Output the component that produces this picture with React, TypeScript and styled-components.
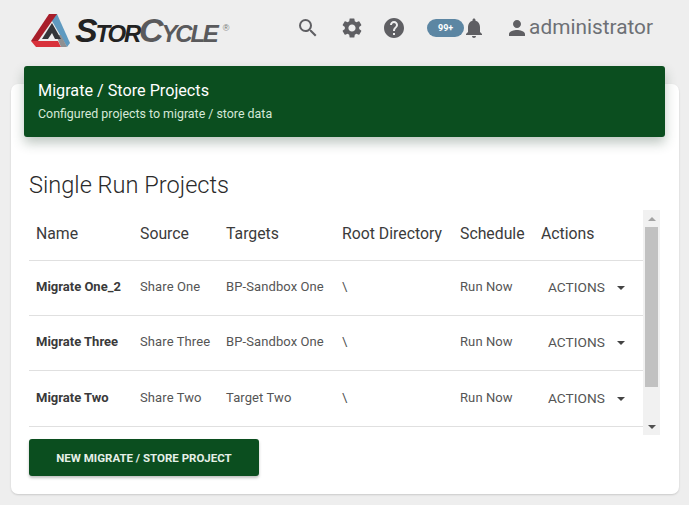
import React from "react";
import styled, { createGlobalStyle } from "styled-components";

const Global = createGlobalStyle`
  html, body { margin: 0; padding: 0; background: #eeeeee; }
  body { font-family: Roboto, "Liberation Sans", sans-serif; }
  #root { width: 689px; height: 505px; overflow: hidden; }
`;

const Page = styled.div`
  width: 689px;
  height: 505px;
  display: flex;
  flex-direction: column;
`;

const Header = styled.header`
  height: 56px;
  display: flex;
  align-items: center;
  padding: 0 36px 0 30px;
  color: #5f6368;
`;

const Logo = styled.div`
  display: flex;
  align-items: center;
  gap: 5px;
  margin-right: auto;
`;

const LogoMarkSvg = styled.svg`
  position: relative;
  top: 3px;
`;

const LogoText = styled.span`
  font-family: "Liberation Sans", Arial, sans-serif;
  font-style: italic;
  font-weight: 700;
  font-size: 34px;
  font-variant: small-caps;
  letter-spacing: -2.2px;
  line-height: 36px;
  color: #222;
  position: relative;
  top: 6px;
`;

const LogoAccent = styled.span`
  color: #5a5a5c;
`;

const Registered = styled.sup`
  font-family: "Liberation Sans", Arial, sans-serif;
  font-size: 9px;
  font-style: normal;
  font-weight: 400;
  letter-spacing: 0;
  color: #777;
  position: relative;
  top: -11px;
  left: 6px;
  vertical-align: baseline;
`;

const IconGroup = styled.div`
  display: flex;
  align-items: center;
`;

const IconSlot = styled.span<{ $mr?: number; $ml?: number }>`
  display: flex;
  color: #5f5f63;
  margin-right: ${(p) => p.$mr ?? 0}px;
  margin-left: ${(p) => p.$ml ?? 0}px;
`;

const Badge = styled.span`
  width: 37px;
  height: 18px;
  border-radius: 9px;
  background: #5c86a3;
  color: #fff;
  font-size: 9px;
  font-weight: 700;
  display: flex;
  align-items: center;
  justify-content: center;
`;

const UserName = styled.span`
  font-size: 20.8px;
  color: #6d7075;
  position: relative;
  top: -1px;
`;

const Card = styled.main`
  margin: 28px 10px 0 11px;
  height: 410px;
  background: #fff;
  border-radius: 7px;
  box-shadow: 0 1px 2px rgba(0, 0, 0, 0.15);
  display: flex;
  flex-direction: column;
  padding: 0 18px;
`;

const Banner = styled.section`
  margin: -18px 0 0 -5px;
  width: 641px;
  height: 71px;
  box-sizing: border-box;
  background: #0b4e1f;
  border-radius: 3px;
  padding: 15px 14px;
  box-shadow: 0 6px 12px rgba(40, 70, 50, 0.3);
  flex: none;
`;

const BannerTitle = styled.div`
  color: #fff;
  font-size: 16.2px;
  line-height: 20px;
`;

const BannerSub = styled.div`
  color: #d5e8d8;
  font-size: 12.4px;
  line-height: 16px;
  margin-top: 5px;
`;

const Heading = styled.h2`
  margin: 33px 0 0;
  font-size: 23.6px;
  font-weight: 300;
  line-height: 30px;
  color: #2a2a2a;
`;

const TableWrap = styled.div`
  display: flex;
  margin-top: 10px;
  height: 225px;
  width: 631px;
`;

const TableClip = styled.div`
  width: 614px;
  height: 225px;
  overflow: hidden;
`;

const Table = styled.table`
  width: 614px;
  table-layout: fixed;
  border-collapse: collapse;
`;

const Th = styled.th<{ $w: number }>`
  width: ${(p) => p.$w}px;
  height: 50px;
  box-sizing: border-box;
  padding: 0 0 2px 7px;
  font-size: 15.8px;
  font-weight: 400;
  text-align: left;
  color: #3b3b3b;
  border-bottom: 1px solid #e0e0e0;
  white-space: nowrap;
`;

const Row = styled.tr<{ $h: number }>`
  height: ${(p) => p.$h}px;
`;

const Td = styled.td<{ $bold?: boolean }>`
  padding: 0 0 2px 7px;
  font-size: 13px;
  letter-spacing: ${(p) => (p.$bold ? "0" : "0.1px")};
  font-weight: ${(p) => (p.$bold ? 700 : 400)};
  color: ${(p) => (p.$bold ? "#3a3a3a" : "#555")};
  border-bottom: 1px solid #e0e0e0;
  white-space: nowrap;
`;

const ActionBtn = styled.div`
  display: inline-flex;
  align-items: center;
  font-size: 13.7px;
  letter-spacing: 0;
  color: #555;
  margin: 1px 0 0 7px;
  width: 77px;
  justify-content: space-between;
`;

const Caret = styled.span`
  width: 0;
  height: 0;
  border-left: 4px solid transparent;
  border-right: 4px solid transparent;
  border-top: 4px solid #444;
  margin-top: 2px;
`;

const Scrollbar = styled.div`
  width: 17px;
  height: 225px;
  background: #f1f1f1;
  display: flex;
  flex-direction: column;
  align-items: center;
`;

const Arrow = styled.div<{ $up?: boolean }>`
  flex: none;
  height: 17px;
  width: 17px;
  display: flex;
  align-items: center;
  justify-content: center;
  &::after {
    content: "";
    border-left: 4px solid transparent;
    border-right: 4px solid transparent;
    ${(p) =>
      p.$up ? "border-bottom: 4px solid #a3a3a3;" : "border-top: 4px solid #505050;"}
  }
`;

const Thumb = styled.div`
  width: 13px;
  height: 160px;
  background: #c1c1c1;
`;

const Spacer = styled.div`
  flex: 1;
`;

const NewButton = styled.button`
  flex: none;
  width: 230px;
  height: 37px;
  margin-top: 4px;
  border: 0;
  border-radius: 3px;
  background: #0b4e1f;
  color: #e6f0e8;
  font-family: Roboto, "Liberation Sans", sans-serif;
  font-size: 11.5px;
  font-weight: 700;
  box-shadow: 0 2px 3px rgba(0, 0, 0, 0.25);
`;

const Search = () => (
  <svg width="24" height="24" viewBox="0 0 24 24" fill="currentColor">
    <path d="M15.5 14h-.79l-.28-.27A6.47 6.47 0 0 0 16 9.5 6.5 6.5 0 1 0 9.5 16c1.61 0 3.09-.59 4.23-1.57l.27.28v.79l5 4.99L20.49 19l-4.99-5zm-6 0C7.01 14 5 11.99 5 9.5S7.01 5 9.5 5 14 7.01 14 9.5 11.99 14 9.5 14z" />
  </svg>
);
const Gear = () => (
  <svg width="24" height="24" viewBox="0 0 24 24" fill="currentColor">
    <path d="M19.14 12.94c.04-.3.06-.61.06-.94 0-.32-.02-.64-.07-.94l2.03-1.58a.49.49 0 0 0 .12-.61l-1.92-3.32a.488.488 0 0 0-.59-.22l-2.39.96c-.5-.38-1.03-.7-1.62-.94l-.36-2.54a.484.484 0 0 0-.48-.41h-3.84c-.24 0-.43.17-.47.41l-.36 2.54c-.59.24-1.13.57-1.62.94l-2.39-.96c-.22-.08-.47 0-.59.22L2.74 8.87c-.12.21-.08.47.12.61l2.03 1.58c-.05.3-.09.63-.09.94s.02.64.07.94l-2.03 1.58a.49.49 0 0 0-.12.61l1.92 3.32c.12.22.37.29.59.22l2.39-.96c.5.38 1.03.7 1.62.94l.36 2.54c.05.24.24.41.48.41h3.84c.24 0 .44-.17.47-.41l.36-2.54c.59-.24 1.13-.56 1.62-.94l2.39.96c.22.08.47 0 .59-.22l1.92-3.32c.12-.22.07-.47-.12-.61l-2.01-1.58zM12 15.6c-1.98 0-3.6-1.62-3.6-3.6s1.62-3.6 3.6-3.6 3.6 1.62 3.6 3.6-1.62 3.6-3.6 3.6z" />
  </svg>
);
const Help = () => (
  <svg width="24" height="24" viewBox="0 0 24 24" fill="currentColor">
    <path d="M12 2C6.48 2 2 6.48 2 12s4.48 10 10 10 10-4.48 10-10S17.52 2 12 2zm1 17h-2v-2h2v2zm2.07-7.75l-.9.92C13.45 12.9 13 13.5 13 15h-2v-.5c0-1.1.45-2.1 1.17-2.83l1.24-1.26c.37-.36.59-.86.59-1.41 0-1.1-.9-2-2-2s-2 .9-2 2H8c0-2.21 1.79-4 4-4s4 1.79 4 4c0 .88-.36 1.68-.93 2.25z" />
  </svg>
);
const Bell = () => (
  <svg width="24" height="24" viewBox="0 0 24 24" fill="currentColor">
    <path d="M12 22c1.1 0 2-.9 2-2h-4c0 1.1.89 2 2 2zm6-6v-5c0-3.07-1.64-5.64-4.5-6.32V4c0-.83-.67-1.5-1.5-1.5s-1.5.67-1.5 1.5v.68C7.63 5.36 6 7.92 6 11v5l-2 2v1h16v-1l-2-2z" />
  </svg>
);
const Person = () => (
  <svg width="24" height="24" viewBox="0 0 24 24" fill="currentColor">
    <path d="M12 12c2.21 0 4-1.79 4-4s-1.79-4-4-4-4 1.79-4 4 1.79 4 4 4zm0 2c-2.67 0-8 1.34-8 4v2h16v-2c0-2.66-5.33-4-8-4z" />
  </svg>
);

const LogoMark = () => (
  <LogoMarkSvg width="40" height="36" viewBox="0 0 40 36">
    <polygon points="19,1 27,1 40,30 37,34 22,8" fill="#5f9ac0" />
    <polygon points="19,1 27,1 8,28 1,28" fill="#a81e2a" />
    <polygon points="1,28 28,28 31,34 6,34" fill="#d8313b" />
    <polygon points="26,22 31,22 37,34 31,34" fill="#8f9092" />
    <polygon points="12,26 22,10 31,26 25,26 22,20 18,26" fill="#34363a" />
  </LogoMarkSvg>
);

const columns = [
  { label: "Name", w: 104 },
  { label: "Source", w: 86 },
  { label: "Targets", w: 116 },
  { label: "Root Directory", w: 118 },
  { label: "Schedule", w: 81 },
  { label: "Actions", w: 109 },
];

const rows = [
  { name: "Migrate One_2", source: "Share One", target: "BP-Sandbox One", h: 55 },
  { name: "Migrate Three", source: "Share Three", target: "BP-Sandbox One", h: 55 },
  { name: "Migrate Two", source: "Share Two", target: "Target Two", h: 56 },
];

export default function App() {
  return (
    <Page>
      <Global />
      <Header>
        <Logo>
          <LogoMark />
          <LogoText>
            Stor<LogoAccent>Cycle</LogoAccent>
            <Registered>®</Registered>
          </LogoText>
        </Logo>
        <IconGroup>
          <IconSlot $mr={20}><Search /></IconSlot>
          <IconSlot $mr={18}><Gear /></IconSlot>
          <IconSlot $mr={21}><Help /></IconSlot>
          <Badge>99+</Badge>
          <IconSlot $mr={19} $ml={-2}><Bell /></IconSlot>
          <IconSlot><Person /></IconSlot>
          <UserName>administrator</UserName>
        </IconGroup>
      </Header>
      <Card>
        <Banner>
          <BannerTitle>Migrate / Store Projects</BannerTitle>
          <BannerSub>Configured projects to migrate / store data</BannerSub>
        </Banner>
        <Heading>Single Run Projects</Heading>
        <TableWrap>
          <TableClip>
            <Table>
              <thead>
                <tr>
                  {columns.map((c) => (
                    <Th key={c.label} $w={c.w}>{c.label}</Th>
                  ))}
                </tr>
              </thead>
              <tbody>
                {rows.map((r) => (
                  <Row key={r.name} $h={r.h}>
                    <Td $bold>{r.name}</Td>
                    <Td>{r.source}</Td>
                    <Td>{r.target}</Td>
                    <Td>\</Td>
                    <Td>Run Now</Td>
                    <Td>
                      <ActionBtn>ACTIONS<Caret /></ActionBtn>
                    </Td>
                  </Row>
                ))}
              </tbody>
            </Table>
          </TableClip>
          <Scrollbar>
            <Arrow $up />
            <Thumb />
            <Spacer />
            <Arrow />
          </Scrollbar>
        </TableWrap>
        <NewButton>NEW MIGRATE / STORE PROJECT</NewButton>
      </Card>
    </Page>
  );
}
